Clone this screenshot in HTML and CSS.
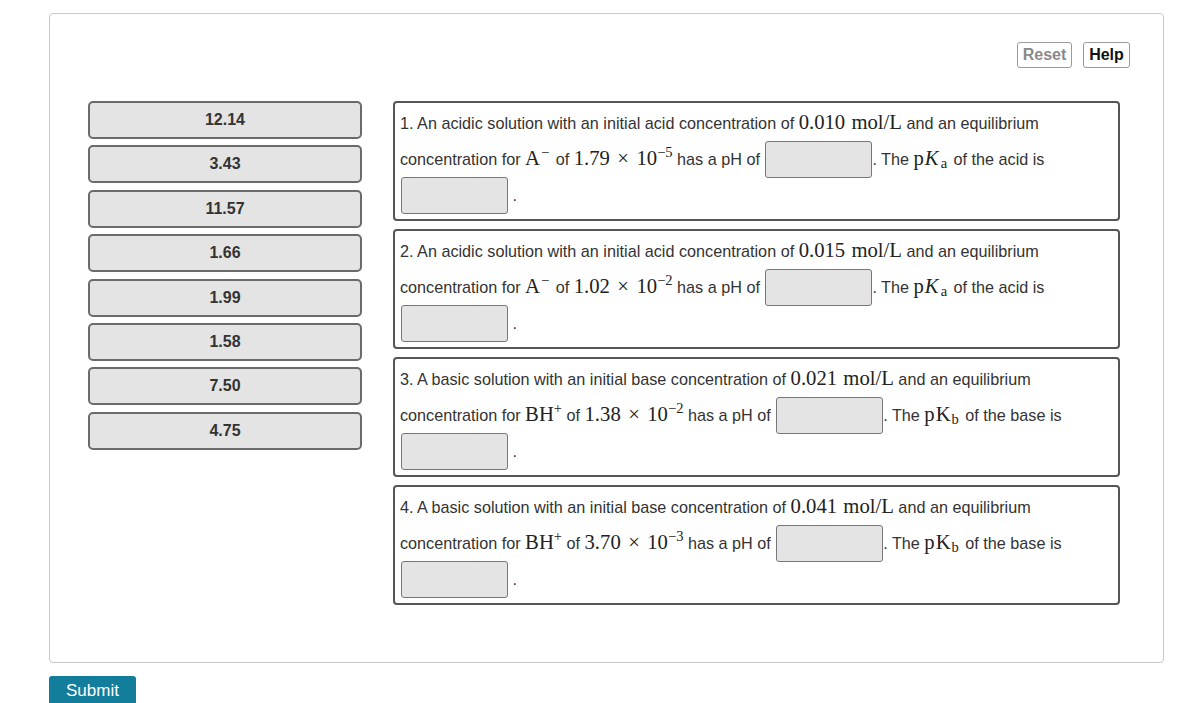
FILE: index.html
```html
<!DOCTYPE html>
<html>
<head>
<meta charset="utf-8">
<link rel="stylesheet" href="styles.css">
</head>
<body>
<div class="page">
  <div class="panel">
    <div class="toolbar">
      <button class="tbtn reset">Reset</button>
      <button class="tbtn help">Help</button>
    </div>
    <div class="main">
      <div class="tiles">
        <div class="tile">12.14</div>
        <div class="tile">3.43</div>
        <div class="tile">11.57</div>
        <div class="tile">1.66</div>
        <div class="tile">1.99</div>
        <div class="tile">1.58</div>
        <div class="tile">7.50</div>
        <div class="tile">4.75</div>
      </div>
      <div class="questions">
        <div class="q">
          <div class="line">1. An acidic solution with an initial acid concentration of <span class="m">0.010<span class="sp"></span>mol/L</span> and an equilibrium</div>
          <div class="line">concentration for <span class="m">A<sup class="neg">−</sup></span> of <span class="m">1.79<span class="op">×</span>10<sup>−5</sup></span> has a pH of <span class="drop"></span>. The <span class="m">p<i>K</i><sub>a</sub></span> of the acid is</div>
          <div class="line"><span class="drop first"></span> .</div>
        </div>
        <div class="q">
          <div class="line">2. An acidic solution with an initial acid concentration of <span class="m">0.015<span class="sp"></span>mol/L</span> and an equilibrium</div>
          <div class="line">concentration for <span class="m">A<sup class="neg">−</sup></span> of <span class="m">1.02<span class="op">×</span>10<sup>−2</sup></span> has a pH of <span class="drop"></span>. The <span class="m">p<i>K</i><sub>a</sub></span> of the acid is</div>
          <div class="line"><span class="drop first"></span> .</div>
        </div>
        <div class="q">
          <div class="line">3. A basic solution with an initial base concentration of <span class="m">0.021<span class="sp"></span>mol/L</span> and an equilibrium</div>
          <div class="line">concentration for <span class="m">BH<sup>+</sup></span> of <span class="m">1.38<span class="op">×</span>10<sup>−2</sup></span> has a pH of <span class="drop"></span>. The <span class="m">p<span class="k">K</span><sub>b</sub></span> of the base is</div>
          <div class="line"><span class="drop first"></span> .</div>
        </div>
        <div class="q">
          <div class="line">4. A basic solution with an initial base concentration of <span class="m">0.041<span class="sp"></span>mol/L</span> and an equilibrium</div>
          <div class="line">concentration for <span class="m">BH<sup>+</sup></span> of <span class="m">3.70<span class="op">×</span>10<sup>−3</sup></span> has a pH of <span class="drop"></span>. The <span class="m">p<span class="k">K</span><sub>b</sub></span> of the base is</div>
          <div class="line"><span class="drop first"></span> .</div>
        </div>
      </div>
    </div>
  </div>
  <button class="submit">Submit</button>
</div>
</body>
</html>
```

FILE: styles.css
```css
html, body {
  margin: 0;
  padding: 0;
  background: #ffffff;
}

body {
  font-family: "Liberation Sans", Arial, sans-serif;
  color: #333333;
  overflow: hidden;
}

.page {
  padding: 13px 0 0 49px;
}

.panel {
  box-sizing: border-box;
  width: 1115px;
  height: 650px;
  border: 1px solid #c8c8c8;
  border-radius: 4px;
}

.toolbar {
  display: flex;
  justify-content: flex-end;
  gap: 11px;
  padding: 28px 33px 0 0;
}

.tbtn {
  box-sizing: border-box;
  height: 26px;
  padding: 0 4px;
  background: #ffffff;
  border: 1px solid #9a9a9a;
  border-radius: 3px;
  font-family: "Liberation Sans", Arial, sans-serif;
  font-size: 16px;
  font-weight: bold;
}

.reset {
  width: 55px;
  color: #8a8a8a;
}

.help {
  width: 47px;
  color: #111111;
}

.main {
  display: flex;
  gap: 31px;
  padding: 33px 0 0 38px;
}

.tiles {
  display: flex;
  flex-direction: column;
  gap: 6.4px;
  width: 274px;
}

.tile {
  box-sizing: border-box;
  height: 38px;
  display: flex;
  align-items: center;
  justify-content: center;
  background: #e4e4e4;
  border: 2px solid #6b6b6b;
  border-radius: 5px;
  font-size: 16px;
  font-weight: bold;
  color: #333333;
}

.questions {
  display: flex;
  flex-direction: column;
  gap: 8px;
  width: 727px;
}

.q {
  box-sizing: border-box;
  height: 120px;
  border: 2px solid #555555;
  border-radius: 4px;
  padding: 3px 5px 0 5px;
  font-size: 16.2px;
  color: #333333;
}

.line {
  height: 36px;
  line-height: 34px;
  white-space: nowrap;
}

.m {
  font-family: "Liberation Serif", "Times New Roman", serif;
  font-size: 20.7px;
  line-height: 1;
  color: #222222;
}

.m .sp {
  display: inline-block;
  width: 0.3em;
}

.m .op {
  margin: 0 0.36em;
}

.m i {
  margin: 0 2px 0 1px;
}

.m .k {
  margin: 0 1px 0 1px;
}

.m sup, .m sub {
  font-size: 14.5px;
  line-height: 0;
}

.m sup {
  vertical-align: 8px;
}

.m sup.neg {
  margin-left: 1px;
  margin-right: 2px;
}

.m sub {
  vertical-align: -3px;
  margin-right: 2px;
}

.drop {
  display: inline-block;
  box-sizing: border-box;
  width: 107px;
  height: 37px;
  vertical-align: middle;
  margin: -3px 0 0 1px;
  background: #e4e4e4;
  border: 1px solid #777777;
  border-radius: 3px;
}

.drop.first {
  margin-left: 1px;
}

.submit {
  margin-top: 13px;
  width: 87px;
  height: 36px;
  padding: 0 0 6px 0;
  background: #137d9c;
  color: #ffffff;
  border: none;
  border-radius: 3px;
  font-family: "Liberation Sans", Arial, sans-serif;
  font-size: 17px;
}
```
